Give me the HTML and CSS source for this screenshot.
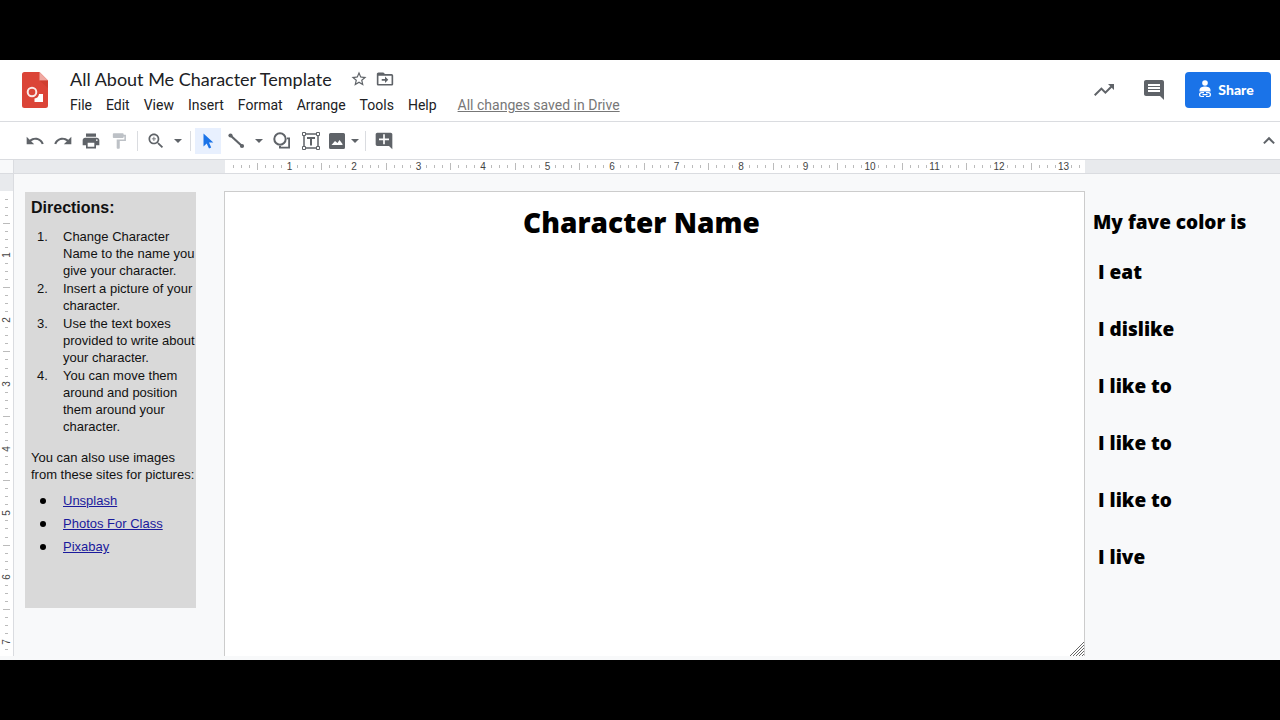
FILE: index.html
```html
<!DOCTYPE html>
<html lang="en">
<head>
  <meta charset="UTF-8">
  <meta name="viewport" content="width=device-width, initial-scale=1">
  <title>All About Me Character Template</title>
  <link rel="stylesheet" href="styles.css">
</head>
<body>

  <div class="app">

    <header class="header">
      <svg class="logo" viewBox="0 0 26 36" aria-hidden="true">
        <path d="M2.500 0H17.500L26 8.500V33.500A2.500 2.500 0 0 1 23.500 36H2.500A2.500 2.500 0 0 1 0 33.500V2.500A2.500 2.500 0 0 1 2.500 0Z" fill="#db4437"/>
        <path d="M17.500 0L26 8.500H17.500Z" fill="#f0a8a1"/>
        <path d="M17.500 8.500H26V16Z" fill="#c53929" opacity=".5"/>
        <circle cx="10" cy="20" r="4.300" fill="none" stroke="#fbe9e7" stroke-width="2"/>
        <path d="M21 22V30H12.500V26.500Q16.500 26 17 22Z" fill="#fff"/>
      </svg>

      <div class="heading">
        <div class="title-row">
          <h1 class="doc-title">All About Me Character Template</h1>
          <button class="title-btn" aria-label="Star">
            <svg viewBox="0 0 24 24"><path d="M22 9.240l-7.190-.620L12 2 9.190 8.630 2 9.240l5.460 4.730L5.820 21 12 17.270 18.180 21l-1.630-7.030L22 9.240zM12 15.400l-3.760 2.270 1-4.280-3.320-2.880 4.380-.380L12 6.100l1.710 4.040 4.380.380-3.320 2.880 1 4.280L12 15.400z"/></svg>
          </button>
          <button class="title-btn" aria-label="Move">
            <svg viewBox="1 1 22 22"><path d="M20 6h-8l-2-2H4c-1.100 0-2 .9-2 2v12c0 1.100.9 2 2 2h16c1.100 0 2-.9 2-2V8c0-1.100-.9-2-2-2zm0 12H4V8h16v10zM12 17l4-4-4-4v3H8v2h4z"/></svg>
          </button>
        </div>
        <nav class="menu">
          <button>File</button>
          <button>Edit</button>
          <button>View</button>
          <button>Insert</button>
          <button>Format</button>
          <button>Arrange</button>
          <button>Tools</button>
          <button>Help</button>
          <a class="saved" href="#">All changes saved in Drive</a>
        </nav>
      </div>

      <div class="actions">
        <button class="action-btn" aria-label="Activity">
          <svg viewBox="0 0 24 24"><path d="M16 6l2.290 2.290-4.880 4.880-4-4L2 16.590 3.410 18l6-6 4 4 6.300-6.290L22 12V6z"/></svg>
        </button>
        <button class="action-btn" aria-label="Comments">
          <svg viewBox="0 0 24 24"><path d="M21.990 4c0-1.100-.890-2-1.990-2H4c-1.100 0-2 .9-2 2v12c0 1.100.9 2 2 2h14l4 4-.010-18zM18 14H6v-2h12v2zm0-3H6V9h12v2zm0-3H6V6h12v2z"/></svg>
        </button>
        <button class="share">
          <svg viewBox="0 0 14 18" aria-hidden="true">
            <circle cx="7" cy="3" r="2.800" fill="#fff"/>
            <path d="M1.500 11.500V10C1.500 7.500 4.500 6.500 7 6.500S12.500 7.500 12.500 10V11.500Z" fill="#fff"/>
            <path d="M6 12.700H3.500A1.900 1.900 0 0 0 3.500 16.500H6M8 12.700H10.500A1.900 1.900 0 0 1 10.500 16.500H8M4.500 14.600H9.500" fill="none" stroke="#fff" stroke-width="1.200"/>
          </svg>
          Share
        </button>
      </div>
    </header>

    <div class="toolbar">
      <button class="tool" aria-label="Undo">
        <svg viewBox="0 0 24 24"><path d="M12.500 8c-2.650 0-5.050.990-6.900 2.600L2 7v9h9l-3.620-3.620c1.390-1.160 3.160-1.880 5.120-1.880 3.540 0 6.550 2.310 7.600 5.500l2.370-.780C21.080 11.030 17.150 8 12.500 8z"/></svg>
      </button>
      <button class="tool" aria-label="Redo">
        <svg viewBox="0 0 24 24"><path d="M18.400 10.600C16.550 8.990 14.150 8 11.500 8c-4.650 0-8.580 3.030-9.960 7.220L3.900 16c1.050-3.190 4.050-5.500 7.600-5.500 1.950 0 3.730.720 5.120 1.880L13 16h9V7l-3.600 3.600z"/></svg>
      </button>
      <button class="tool" aria-label="Print">
        <svg viewBox="0 0 24 24"><path d="M19 8H5c-1.660 0-3 1.340-3 3v6h4v4h12v-4h4v-6c0-1.660-1.340-3-3-3zm-3 11H8v-5h8v5zm3-7c-.550 0-1-.450-1-1s.450-1 1-1 1 .450 1 1-.450 1-1 1zm-1-9H6v4h12V3z"/></svg>
      </button>
      <button class="tool" aria-label="Paint format" disabled>
        <svg viewBox="-1 -1 26 26"><path d="M18 4V3c0-.550-.450-1-1-1H5c-.550 0-1 .450-1 1v4c0 .550.450 1 1 1h12c.550 0 1-.450 1-1V6h1v4H9v11c0 .550.450 1 1 1h2c.550 0 1-.450 1-1v-9h8V4h-3z"/></svg>
      </button>
      <span class="divider"></span>
      <button class="tool" aria-label="Zoom">
        <svg viewBox="0 0 24 24"><path d="M15.500 14h-.790l-.280-.270C15.410 12.590 16 11.110 16 9.500 16 5.910 13.090 3 9.500 3S3 5.910 3 9.500 5.910 16 9.500 16c1.610 0 3.090-.590 4.230-1.570l.270.280v.790l5 4.990L20.490 19l-4.990-5zm-6 0C7.010 14 5 11.990 5 9.500S7.010 5 9.500 5 14 7.010 14 9.500 11.990 14 9.500 14zM12 10h-2v2H9v-2H7V9h2V7h1v2h2v1z"/></svg>
      </button>
      <button class="caret" aria-label="Zoom options"><svg viewBox="0 0 8 4"><path d="M0 0H8L4 4Z"/></svg></button>
      <span class="divider"></span>
      <button class="tool active" aria-label="Select">
        <svg viewBox="0 0 20 20"><path d="M5.500 2.500V15.500L8.700 12.500L11 17.500L13.200 16.500L11 11.600H15.300Z"/></svg>
      </button>
      <button class="tool line" aria-label="Line">
        <svg viewBox="0 0 20 20"><path d="M4.500 4.500L16 15" stroke="#5f6368" stroke-width="2.200"/><circle cx="4.500" cy="4.500" r="2.100"/><circle cx="16" cy="15" r="2.100"/></svg>
      </button>
      <button class="caret" aria-label="Line options"><svg viewBox="0 0 8 4"><path d="M0 0H8L4 4Z"/></svg></button>
      <button class="tool wide" aria-label="Shape">
        <svg viewBox="0 0 20 20"><circle cx="8" cy="8" r="5.700" fill="none" stroke="#5f6368" stroke-width="2"/><path d="M15 6.500H18V17.500H7V15H9V15.800H16.200V8.200H15Z"/></svg>
      </button>
      <button class="tool" aria-label="Text box">
        <svg viewBox="0 0 20 20"><path d="M3 3H17V17H3Z" fill="none" stroke="#5f6368" stroke-width="1.500"/><path d="M1.500 1.500h3v3h-3zM15.500 1.500h3v3h-3zM1.500 15.500h3v3h-3zM15.500 15.500h3v3h-3z" fill="#fff" stroke="#5f6368"/><path d="M6 6H14V8H11V14.500H9V8H6Z"/></svg>
      </button>
      <button class="tool image" aria-label="Image">
        <svg viewBox="0 0 20 20"><path d="M3.500 2H16.500A1.500 1.500 0 0 1 18 3.500V16.500A1.500 1.500 0 0 1 16.500 18H3.500A1.500 1.500 0 0 1 2 16.500V3.500A1.500 1.500 0 0 1 3.500 2ZM4.500 14H15.500V13L12.500 9L10.500 12L8 10Z" fill-rule="evenodd"/></svg>
      </button>
      <button class="caret narrow" aria-label="Image options"><svg viewBox="0 0 8 4"><path d="M0 0H8L4 4Z"/></svg></button>
      <span class="divider"></span>
      <button class="tool" aria-label="Add comment">
        <svg viewBox="0 0 24 24"><path d="M22 4c0-1.100-.9-2-2-2H4c-1.100 0-2 .9-2 2v12c0 1.100.9 2 2 2h14l4 4V4zm-4 7h-5v5h-2v-5H6V9h5V4h2v5h5v2z"/></svg>
      </button>
      <button class="tool collapse" aria-label="Hide menus">
        <svg viewBox="0 0 24 24"><path d="M12 7l-7 7 1.700 1.700L12 10.400l5.300 5.300L19 14z"/></svg>
      </button>
    </div>

    <div class="ruler-row">
      <span class="corner"></span>
      <div class="ruler-h" id="ruler-h"></div>
    </div>

    <div class="workspace">
      <div class="ruler-v">
        <div class="ruler-v-scale" id="ruler-v"></div>
      </div>

      <aside class="side">
        <section class="directions">
          <h2>Directions:</h2>
          <ol>
            <li>Change Character Name to the name you give your character.</li>
            <li>Insert a picture of your character.</li>
            <li>Use the text boxes provided to write about your character.</li>
            <li>You can move them around and position them around your character.</li>
          </ol>
          <p>You can also use images from these sites for pictures:</p>
          <ul>
            <li><a href="#">Unsplash</a></li>
            <li><a href="#">Photos For Class</a></li>
            <li><a href="#">Pixabay</a></li>
          </ul>
        </section>
      </aside>

      <main class="page">
        <h2 class="name">Character Name</h2>
        <svg class="grip" viewBox="0 0 14 14" aria-hidden="true"><path d="M0 14L14 0M3 14L14 3M6 14L14 6M9 14L14 9M12 14L14 12"/></svg>
      </main>

      <aside class="notes">
        <p class="color">My fave color is</p>
        <p>I eat</p>
        <p>I dislike</p>
        <p>I like to</p>
        <p>I like to</p>
        <p>I like to</p>
        <p>I live</p>
      </aside>
    </div>

  </div>

  <script>
    // one mark for each eighth of an inch, a number on each whole inch
    function drawRuler(id, marks, rest) {
      const ruler = document.getElementById(id);
      const addSpace = (size) => {
        const space = document.createElement('span');
        space.style.flex = size;
        ruler.appendChild(space);
      };

      addSpace(0.5);
      for (let i = 1; i <= marks; i++) {
        const mark = document.createElement('span');
        mark.className = 'mark';
        if (i % 8 === 0) {
          mark.className = 'mark number';
          const label = document.createElement('span');
          label.textContent = i / 8;
          mark.appendChild(label);
        } else if (i % 4 === 0) {
          mark.className = 'mark half';
        }
        ruler.appendChild(mark);
      }
      addSpace(rest);
    }

    drawRuler('ruler-h', 106, 0.17);
    drawRuler('ruler-v', 59, 0.5);
  </script>

</body>
</html>
```
FILE: styles.css
```css
* {
  box-sizing: border-box;
}

body {
  margin: 0;
  padding: 60px 0;
  height: 100vh;
  background-color: #000;
  color: #202124;
  font-family: Roboto, Arial, sans-serif;
  font-size: 14px;
  overflow: hidden;
}

h1, h2, p, ol, ul {
  margin: 0;
  padding: 0;
}

button {
  display: flex;
  align-items: center;
  justify-content: center;
  margin: 0;
  padding: 0;
  border: none;
  background: none;
  color: inherit;
  font: inherit;
  cursor: pointer;
}

svg {
  display: block;
  flex: none;
  fill: #5f6368;
}

.app {
  display: flex;
  flex-direction: column;
  height: 100%;
  background-color: #fff;
}

/* header */

.header {
  display: flex;
  align-items: flex-start;
  height: 62px;
  flex: none;
  padding: 7px 9px 0 22px;
  border-bottom: 1px solid #dadce0;
}

.logo {
  width: 26px;
  height: 36px;
  margin-top: 5px;
}

.heading {
  margin-left: 22px;
}

.title-row {
  display: flex;
  align-items: center;
  height: 24px;
}

.doc-title {
  margin-right: 18px;
  font-family: Lato, sans-serif;
  font-size: 18px;
  font-weight: 400;
  line-height: 22px;
  white-space: nowrap;
}

.title-btn {
  margin-right: 8px;
}

.title-btn svg {
  width: 18px;
  height: 18px;
}

.menu {
  display: flex;
  align-items: center;
  gap: 14px;
  height: 28px;
}

.saved {
  margin-left: 7px;
  color: #777;
  white-space: nowrap;
}

.actions {
  display: flex;
  align-items: center;
  gap: 20px;
  margin: 5px 0 0 auto;
}

.action-btn {
  width: 30px;
  height: 36px;
}

.action-btn svg {
  width: 24px;
  height: 24px;
}

.share {
  gap: 6px;
  width: 86px;
  height: 36px;
  margin-left: -4px;
  padding: 0 4px 2px 0;
  border-radius: 4px;
  background-color: #1a73e8;
  color: #fff;
  font-family: Lato, sans-serif;
  font-size: 14px;
  font-weight: 900;
}

.share svg {
  width: 14px;
  height: 18px;
}

/* toolbar */

.toolbar {
  display: flex;
  align-items: center;
  height: 38px;
  flex: none;
  padding-left: 21px;
  border-bottom: 1px solid #dadce0;
}

.tool {
  width: 28px;
  height: 26px;
}

.tool svg {
  width: 20px;
  height: 20px;
}

.tool:disabled svg {
  fill: #bdc1c6;
}

.tool.active {
  width: 26px;
  background-color: #e8f0fe;
}

.tool.active svg {
  fill: #1a73e8;
}

.tool.wide,
.tool.line {
  width: 30px;
}

.tool.image {
  width: 24px;
}

.tool.collapse {
  width: 22px;
  margin-left: auto;
}

.caret {
  width: 16px;
  height: 26px;
}

.caret svg {
  width: 8px;
  height: 4px;
}

.caret.narrow {
  width: 12px;
}

.divider {
  width: 1px;
  height: 20px;
  margin: 0 4px;
  background-color: #dadce0;
}

/* rulers */

.ruler-row {
  display: grid;
  grid-template-columns: 14px 211px 1fr 195px;
  height: 14px;
  flex: none;
  border-bottom: 1px solid #dadce0;
  background-color: #e8eaed;
}

.corner {
  border-right: 1px solid #dadce0;
  background-color: #f8f9fa;
}

.ruler-h {
  display: flex;
  grid-column: 3;
  background-color: #fff;
}

.ruler-v {
  padding-top: 17px;
  border-right: 1px solid #dadce0;
  background-color: #e8eaed;
  overflow: hidden;
}

.ruler-v-scale {
  display: flex;
  flex-direction: column;
  height: 483px;
  background-color: #fff;
}

.mark {
  display: flex;
  flex: 1 1 0;
  align-items: center;
  justify-content: center;
  min-width: 0;
  min-height: 0;
  color: #444;
  font-family: "Liberation Sans", Arial, sans-serif;
  font-size: 10px;
  line-height: 12px;
}

.mark::before {
  content: "";
  width: 1px;
  height: 3px;
  background-color: #bbb;
}

.mark.half::before {
  height: 7px;
}

.mark.number::before {
  display: none;
}

.ruler-v .mark::before {
  width: 3px;
  height: 1px;
}

.ruler-v .mark.half::before {
  width: 7px;
}

.ruler-v .number span {
  transform: rotate(-90deg);
}

/* drawing area */

.workspace {
  display: grid;
  grid-template-columns: 14px 210px 1fr 195px;
  flex: 1;
  min-height: 0;
  padding-bottom: 4px;
  background-color: #f8f9fa;
}

.workspace > * {
  min-height: 0;
}

.side {
  padding: 18px 28px 0 11px;
}

.directions {
  padding: 6px 0 47px 6px;
  background-color: #d9d9d9;
  color: #111;
  font-family: "Liberation Sans", Arial, sans-serif;
  font-size: 13px;
  line-height: 17px;
}

.directions h2 {
  margin-bottom: 10px;
  font-size: 16px;
  line-height: 20px;
}

.directions ol,
.directions ul {
  padding-left: 32px;
}

.directions ol {
  list-style: none;
  counter-reset: step;
}

.directions ol li {
  display: flex;
  margin: 0 0 1px -26px;
  counter-increment: step;
}

.directions ol li::before {
  content: counter(step) ".";
  flex: 0 0 26px;
}

.directions p {
  margin: 14px 0 9px;
}

.directions ul {
  list-style: none;
}

.directions ul li {
  display: flex;
  align-items: center;
  margin: 0 0 6px -23px;
}

.directions ul li::before {
  content: "";
  width: 6px;
  height: 6px;
  margin-right: 17px;
  border-radius: 50%;
  background-color: #000;
}

.directions a {
  color: #1a1a9c;
}

.page {
  display: flex;
  flex-direction: column;
  justify-content: space-between;
  align-items: center;
  margin-top: 17px;
  padding-top: 10px;
  border: 1px solid #ccc;
  border-bottom: none;
  background-color: #fff;
}

.name,
.notes {
  color: #000;
  font-family: "Open Sans", sans-serif;
  font-weight: 800;
}

.name {
  padding-right: 26px;
  font-size: 28px;
  line-height: 40px;
}

.grip {
  align-self: flex-end;
  width: 14px;
  height: 14px;
  fill: none;
  stroke: #666;
}

.notes {
  padding: 27px 0 0 13px;
  font-size: 19px;
  line-height: 57px;
  white-space: nowrap;
}

.notes .color {
  margin-left: -5px;
  line-height: 43px;
}
```
